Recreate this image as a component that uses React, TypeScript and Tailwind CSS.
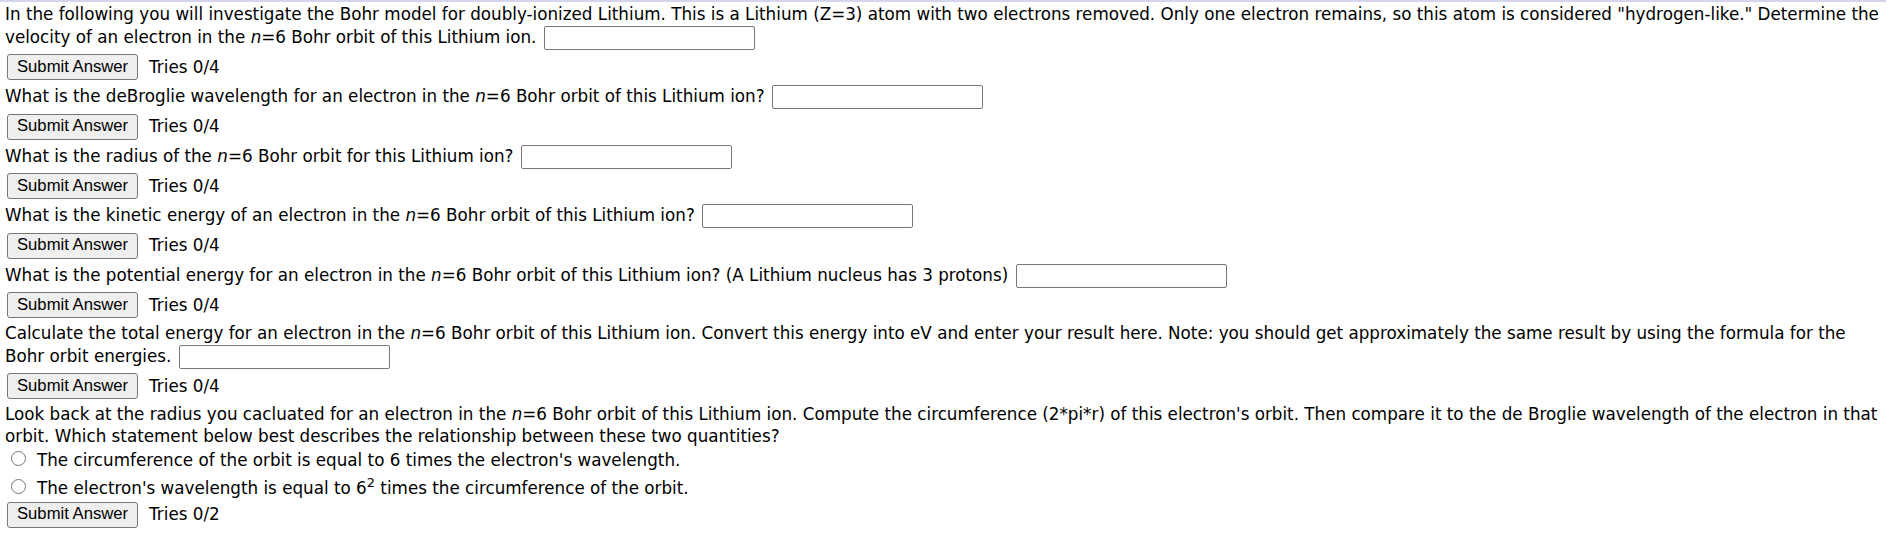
import React from 'react';

const bodyFont = "font-['DejaVu_Sans',Verdana,sans-serif]";

function AnswerBox() {
  return (
    <>
      {' '}
      <input
        type="text"
        className="ml-[2px] inline-block h-[24px] w-[211px] rounded-[2px] border border-[#767676] bg-white px-[2px] align-middle outline-none"
      />
    </>
  );
}

function SubmitRow({ tries, className = 'my-[4.75px]' }: { tries: string; className?: string }) {
  return (
    <div className={`flex items-center ${className}`}>
      <button className="ml-[2px] h-[26px] rounded-[3px] border border-[#767676] bg-[#efefef] px-[9px] font-['Liberation_Sans',Arial,sans-serif] text-[16.67px] leading-none text-black">
        Submit Answer
      </button>
      <span className="ml-[11px]">Tries {tries}</span>
    </div>
  );
}

function N() {
  return <i>n</i>;
}

function Radio({ children, className = '' }: { children: React.ReactNode; className?: string }) {
  return (
    <label className={`flex h-[24px] items-start ${className}`}>
      <span className="ml-[6px] mr-[11px] mt-[4px] inline-block h-[15px] w-[15px] shrink-0 rounded-full border border-[#767676] bg-white" />
      <span className="pt-[2.5px]">{children}</span>
    </label>
  );
}

export default function App() {
  return (
    <div className={`w-[1886px] border-t-2 border-[#d4d4ec] bg-white pt-[2px] pl-[5px] text-[16.75px] leading-[21.5px] text-black ${bodyFont}`}>
      <div>
        In the following you will investigate the Bohr model for doubly-ionized Lithium. This is a Lithium (Z=3) atom with two electrons removed. Only one electron remains, so this atom is considered "hydrogen-like." Determine the velocity of an electron in the <N />=6 Bohr orbit of this Lithium ion.
        <AnswerBox />
      </div>
      <SubmitRow tries="0/4" />

      <div>
        What is the deBroglie wavelength for an electron in the <N />=6 Bohr orbit of this Lithium ion?
        <AnswerBox />
      </div>
      <SubmitRow tries="0/4" />

      <div>
        What is the radius of the <N />=6 Bohr orbit for this Lithium ion?
        <AnswerBox />
      </div>
      <SubmitRow tries="0/4" />

      <div>
        What is the kinetic energy of an electron in the <N />=6 Bohr orbit of this Lithium ion?
        <AnswerBox />
      </div>
      <SubmitRow tries="0/4" />

      <div>
        What is the potential energy for an electron in the <N />=6 Bohr orbit of this Lithium ion? (A Lithium nucleus has 3 protons)
        <AnswerBox />
      </div>
      <SubmitRow tries="0/4" />

      <div>
        Calculate the total energy for an electron in the <N />=6 Bohr orbit of this Lithium ion. Convert this energy into eV and enter your result here. Note: you should get approximately the same result by using the formula for the Bohr orbit energies.
        <AnswerBox />
      </div>
      <SubmitRow tries="0/4" />

      <div>
        Look back at the radius you cacluated for an electron in the <N />=6 Bohr orbit of this Lithium ion. Compute the circumference (2*pi*r) of this electron's orbit. Then compare it to the de Broglie wavelength of the electron in that orbit. Which statement below best describes the relationship between these two quantities?
      </div>
      <Radio>The circumference of the orbit is equal to 6 times the electron's wavelength.</Radio>
      <Radio className="mt-[4px]">
        The electron's wavelength is equal to 6<sup className="text-[13px]">2</sup> times the circumference of the orbit.
      </Radio>
      <SubmitRow tries="0/2" className="mt-[2.75px]" />
    </div>
  );
}
